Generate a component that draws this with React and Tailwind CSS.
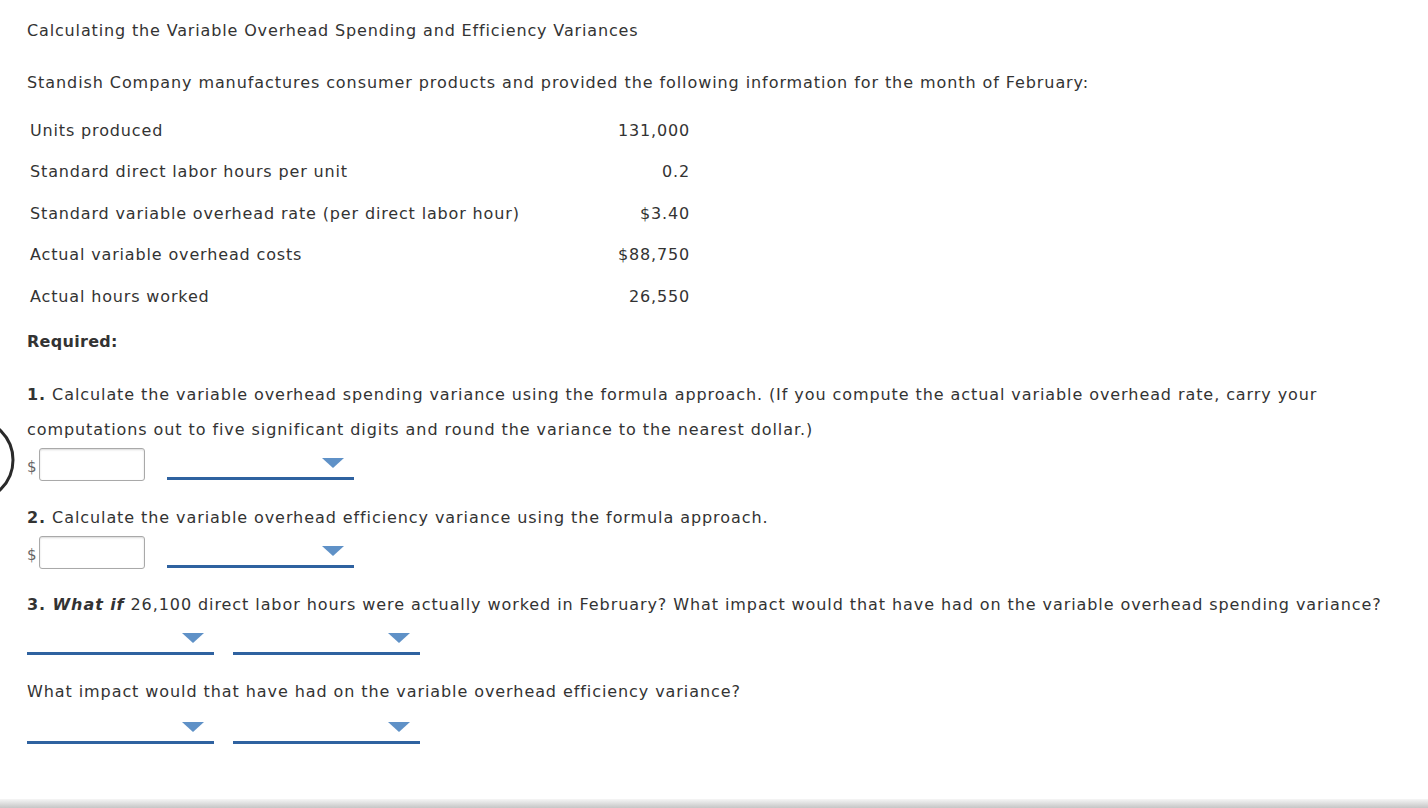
import React from 'react';

const rows = [
  ['Units produced', '131,000'],
  ['Standard direct labor hours per unit', '0.2'],
  ['Standard variable overhead rate (per direct labor hour)', '$3.40'],
  ['Actual variable overhead costs', '$88,750'],
  ['Actual hours worked', '26,550'],
];

const Caret = () => (
  <svg width="22" height="10" viewBox="0 0 22 10" className="block">
    <path d="M0 0 H22 L11 10 Z" fill="#5f91c7" />
  </svg>
);

const Dropdown = () => (
  <div className="w-[187px] h-[32px] flex items-start justify-end pr-[10px] pt-[10px] border-b-[3px] border-[#2f62a0]">
    <Caret />
  </div>
);

const MoneyInput = () => (
  <div className="flex items-center">
    <span className="text-[15px] tracking-normal text-[#666] mr-[2px] mt-[6px]">$</span>
    <div className="w-[106px] h-[33px] border border-[#a9a9a9] rounded-[3px] bg-white shadow-[inset_0_1px_2px_rgba(0,0,0,0.15)]" />
  </div>
);

export default function App() {
  return (
    <div
      className="relative w-[1428px] h-[808px] bg-white text-[#333] overflow-hidden text-[16px] tracking-[0.92px]"
      style={{ fontFamily: '"DejaVu Sans", Verdana, sans-serif' }}
    >
      {/* partial circle on left edge */}
      <svg className="absolute left-0 top-[428px]" width="20" height="64" viewBox="0 0 20 64">
        <circle cx="-28" cy="32" r="41" fill="none" stroke="#2a2a2a" strokeWidth="3" />
      </svg>

      <div className="pl-[27px] pt-[20px]">
        <p className="leading-[22px] tracking-[0.85px]">
          Calculating the Variable Overhead Spending and Efficiency Variances
        </p>
        <p className="mt-[30px] leading-[22px]">
          Standish Company manufactures consumer products and provided the following information for the month of February:
        </p>

        <div className="mt-[16px] w-[663px] pl-[3px] tracking-[0.85px]">
          {rows.map(([label, value]) => (
            <div key={label} className="flex justify-between h-[41.5px] items-center">
              <span>{label}</span>
              <span>{value}</span>
            </div>
          ))}
        </div>

        <p className="mt-[13px] font-bold leading-[22px] tracking-[0.3px]">Required:</p>

        <p className="mt-[24px] leading-[35px] pr-[80px]">
          <b>1.</b> Calculate the variable overhead spending variance using the formula approach. (If you compute the actual variable overhead rate, carry your computations out to five significant digits and round the variance to the nearest dollar.)
        </p>
        <div className="flex items-center gap-[22px] mt-[1px]">
          <MoneyInput />
          <Dropdown />
        </div>

        <p className="mt-[26px] leading-[22px]">
          <b>2.</b> Calculate the variable overhead efficiency variance using the formula approach.
        </p>
        <div className="flex items-center gap-[22px] mt-[7px]">
          <MoneyInput />
          <Dropdown />
        </div>

        <p className="mt-[25px] leading-[22px]">
          <b>3. <i>What if</i></b> 26,100 direct labor hours were actually worked in February? What impact would that have had on the variable overhead spending variance?
        </p>
        <div className="flex gap-[19px] mt-[7px]">
          <Dropdown />
          <Dropdown />
        </div>

        <p className="mt-[26px] leading-[22px]">
          What impact would that have had on the variable overhead efficiency variance?
        </p>
        <div className="flex gap-[19px] mt-[9px]">
          <Dropdown />
          <Dropdown />
        </div>
      </div>

      <div className="absolute left-0 right-0 bottom-0 h-[9px] bg-gradient-to-b from-[#f6f6f6] to-[#c6c6c6]" />
    </div>
  );
}
